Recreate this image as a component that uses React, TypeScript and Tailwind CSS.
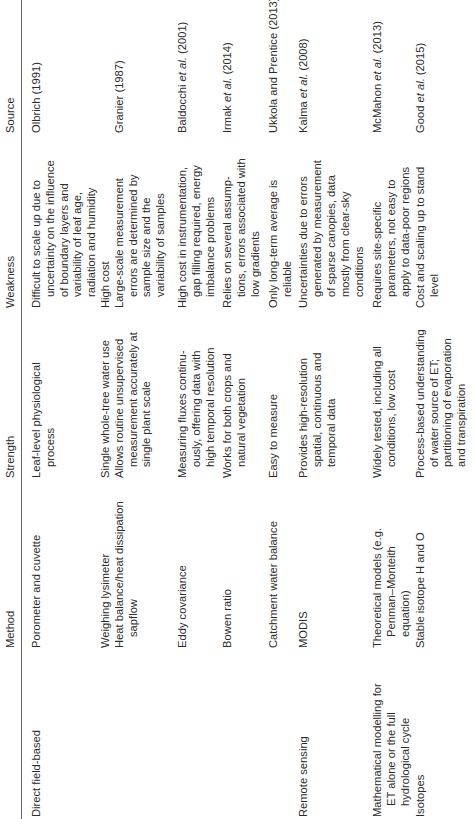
import React from "react";

type Row = {
  pad: string;
  cat: string[];
  method: string[];
  strength: string[];
  weakness: string[];
  source: React.ReactNode;
};

const rows: Row[] = [
  {
    pad: "pt-[8px]",
    cat: ["Direct field-based"],
    method: ["Porometer and cuvette"],
    strength: ["Leaf-level physiological", "process"],
    weakness: [
      "Difficult to scale up due to",
      "uncertainty on the influence",
      "of boundary layers and",
      "variability of leaf age,",
      "radiation and humidity",
    ],
    source: "Olbrich (1991)",
  },
  {
    pad: "pt-0",
    cat: [],
    method: ["Weighing lysimeter"],
    strength: ["Single whole-tree water use"],
    weakness: ["High cost"],
    source: "",
  },
  {
    pad: "pt-0",
    cat: [],
    method: ["Heat balance/heat dissipation", "sapflow"],
    strength: ["Allows routine unsupervised", "measurement accurately at", "single plant scale"],
    weakness: [
      "Large-scale measurement",
      "errors are determined by",
      "sample size and the",
      "variability of samples",
    ],
    source: "Granier (1987)",
  },
  {
    pad: "pt-[8px]",
    cat: [],
    method: ["Eddy covariance"],
    strength: ["Measuring fluxes continu-", "ously, offering data with", "high temporal resolution"],
    weakness: ["High cost in instrumentation,", "gap filling required, energy", "imbalance problems"],
    source: (
      <>
        Baldocchi <i>et al.</i> (2001)
      </>
    ),
  },
  {
    pad: "pt-[4px]",
    cat: [],
    method: ["Bowen ratio"],
    strength: ["Works for both crops and", "natural vegetation"],
    weakness: ["Relies on several assump-", "tions, errors associated with", "low gradients"],
    source: (
      <>
        Irmak <i>et al.</i> (2014)
      </>
    ),
  },
  {
    pad: "pt-[4px]",
    cat: [],
    method: ["Catchment water balance"],
    strength: ["Easy to measure"],
    weakness: ["Only long-term average is", "reliable"],
    source: "Ukkola and Prentice (2013)",
  },
  {
    pad: "pt-[3px]",
    cat: ["Remote sensing"],
    method: ["MODIS"],
    strength: ["Provides high-resolution", "spatial, continuous and", "temporal data"],
    weakness: [
      "Uncertainties due to errors",
      "generated by measurement",
      "of sparse canopies, data",
      "mostly from clear-sky",
      "conditions",
    ],
    source: (
      <>
        Kalma <i>et al.</i> (2008)
      </>
    ),
  },
  {
    pad: "pt-[5px]",
    cat: ["Mathematical modelling for", "ET alone or the full", "hydrological cycle"],
    method: ["Theoretical models (e.g.", "Penman\u2013Monteith", "equation)"],
    strength: ["Widely tested, including all", "conditions, low cost"],
    weakness: ["Requires site-specific", "parameters, not easy to", "apply to data-poor regions"],
    source: (
      <>
        McMahon <i>et al.</i> (2013)
      </>
    ),
  },
  {
    pad: "pt-[1px]",
    cat: ["Isotopes"],
    method: ["Stable isotope H and O"],
    strength: [
      "Process-based understanding",
      "of water source of ET;",
      "partitioning of evaporation",
      "and transpiration",
    ],
    weakness: ["Cost and scaling up to stand", "level"],
    source: (
      <>
        Good <i>et al.</i> (2015)
      </>
    ),
  },
];

function Lines({ lines }: { lines: string[] }) {
  return (
    <div>
      {lines.map((l, i) => (
        <div key={i} className={i === 0 ? "whitespace-nowrap" : "whitespace-nowrap pl-[11px]"}>
          {l}
        </div>
      ))}
    </div>
  );
}

const cols = "grid grid-cols-[171px_170px_170px_175px_133px]";

export default function App() {
  return (
    <div className="w-[474px] h-[819px] overflow-hidden bg-white">
      {/* table is typeset landscape, then turned a quarter left */}
      <div
        className="w-[819px] h-[474px] origin-top-left [transform:translateY(819px)_rotate(-90deg)] text-[11.2px] leading-[13.8px] text-[#2b2b2b]"
        style={{ fontFamily: '"Liberation Sans", Arial, sans-serif' }}
      >
        <div className={`${cols} h-[22px] items-center border-b border-[#666]`}>
          <div />
          <div>Method</div>
          <div>Strength</div>
          <div>Weakness</div>
          <div>Source</div>
        </div>
        {rows.map((r, i) => (
          <div key={i} className={`${cols} ${r.pad}`}>
            <div className="pl-[2px]">
              <Lines lines={r.cat} />
            </div>
            <Lines lines={r.method} />
            <Lines lines={r.strength} />
            <Lines lines={r.weakness} />
            <div className="whitespace-nowrap">{r.source}</div>
          </div>
        ))}
      </div>
    </div>
  );
}
